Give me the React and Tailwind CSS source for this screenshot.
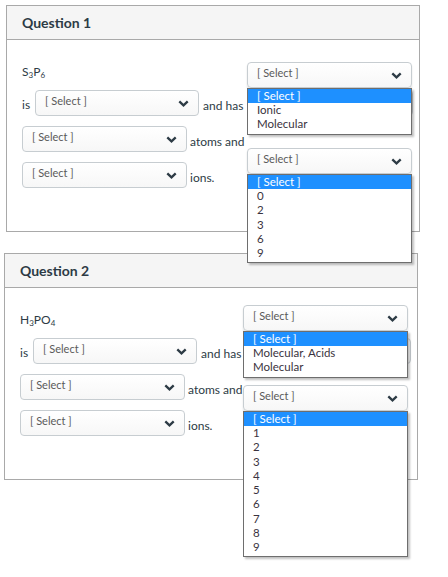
import React from 'react';

const Chevron = () => (
  <svg width="11" height="7" viewBox="0 0 11 7" className="shrink-0">
    <path d="M1.3 1.3 5.5 5.3 9.7 1.3" stroke="#2d3b45" strokeWidth="2.3" fill="none" />
  </svg>
);

// closed select box
const SelectBox = ({ className = '', label = '[ Select ]' }) => (
  <div
    className={`h-[26px] shrink-0 flex items-center justify-between pl-[9px] pr-[9px] bg-gradient-to-b from-white to-[#f7f7f7] border border-[#c7cdd1] rounded-[4px] text-[11px] text-[#5a5a5a] ${className}`}
  >
    <span className="pb-[3px]">{label}</span>
    <Chevron />
  </div>
);

// open select: box plus its option list below it
const OpenSelect = ({ options, className = '' }) => (
  <div className={`absolute z-10 w-[165px] ${className}`}>
    <SelectBox className="w-[165px] shadow-[0_2px_2px_rgba(0,0,0,0.12)]" />
    <div className="bg-white border border-[#6e6e6e] pb-[2px] shadow-[2px_2px_2px_rgba(0,0,0,0.25)]">
      <div className="h-[14px] leading-[14px] pl-[9px] text-[11.5px] bg-[#1e90ff] text-white">[ Select ]</div>
      {options.map(opt => (
        <div key={opt} className="h-[14.25px] leading-[14.25px] pl-[9px] text-[11.5px] text-[#3a3340]">
          {opt}
        </div>
      ))}
    </div>
  </div>
);

const Formula = ({ parts }) => (
  <span className="text-[12px] text-[#2d3b45]">
    {parts.map((p, i) =>
      i % 2 === 0 ? <span key={i}>{p}</span> : <sub key={i} className="text-[8px]">{p}</sub>
    )}
  </span>
);

const QuestionCard = ({ title, formula, className, firstOptions, secondOptions, overlayLeft }) => (
  <div className={`relative w-[414px] h-[227px] border border-[#a9a9a9] bg-white ${className}`}>
    <div className="h-[34px] bg-[#f5f5f5] border-b border-[#a9a9a9] flex items-center pl-[15px]">
      <span className="text-[14px] font-bold text-[#2d3b45] pb-[1px]">{title}</span>
    </div>

    <div className="pl-[15px] pt-[19px] text-[12px] text-[#2d3b45]">
      <div className="h-[26px] flex items-center">
        <Formula parts={formula} />
      </div>

      <div className="mt-[5px] h-[26px] flex items-center">
        <span className="mr-[5px] mt-[3px]">is</span>
        <SelectBox className="w-[164px]" />
        <span className="ml-[4px] mt-[5px]">and has</span>
        {/* this one sits under the open list, only its edges show */}
        <SelectBox className="ml-[4px] w-[166px]" label="" />
      </div>

      <div className="mt-[10px] h-[26px] flex items-center">
        <SelectBox className="w-[165px]" />
        <span className="ml-[3px] mt-[5px]">atoms and</span>
      </div>

      <div className="mt-[10px] h-[26px] flex items-center">
        <SelectBox className="w-[165px]" />
        <span className="ml-[3px] mt-[6px]">ions.</span>
      </div>
    </div>

    <OpenSelect options={firstOptions} className={overlayLeft.first} />
    <OpenSelect options={secondOptions} className={overlayLeft.second} />
  </div>
);

export default function App() {
  return (
    <div className="min-h-[577px] bg-white pt-[5px] font-['Lato','Liberation_Sans',sans-serif]">
      <QuestionCard
        title="Question 1"
        formula={['S', '3', 'P', '6']}
        className="ml-[6px] z-20"
        firstOptions={['Ionic', 'Molecular']}
        secondOptions={['0', '2', '3', '6', '9']}
        overlayLeft={{ first: 'left-[240px] top-[56px]', second: 'left-[240px] top-[142px]' }}
      />
      <QuestionCard
        title="Question 2"
        formula={['H', '3', 'PO', '4']}
        className="ml-[4px] mt-[21px]"
        firstOptions={['Molecular, Acids', 'Molecular']}
        secondOptions={['1', '2', '3', '4', '5', '6', '7', '8', '9']}
        overlayLeft={{ first: 'left-[238px] top-[51px]', second: 'left-[238px] top-[131px]' }}
      />
    </div>
  );
}
